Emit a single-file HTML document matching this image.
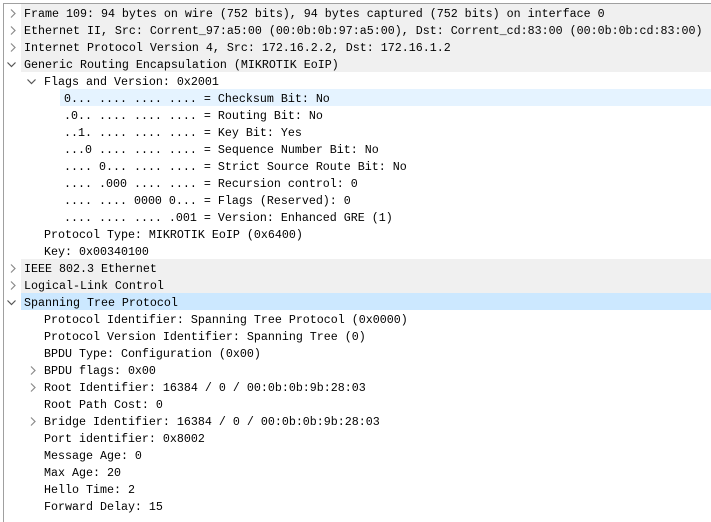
<!DOCTYPE html>
<html><head><style>
body{margin:0;width:711px;height:522px;background:#fff;overflow:hidden;position:relative;font-family:"Liberation Mono",monospace;font-size:11.67px;color:#000}
#frame{position:absolute;left:3px;top:3px;right:0;bottom:0;border-left:1px solid #a0a0a0;border-top:1px solid #a0a0a0}
.r{position:absolute;left:0;right:0;height:17px;line-height:17px;white-space:pre}
.bg{position:absolute;top:0;bottom:0;right:0}
.t{position:absolute;top:1.5px}
.a{position:absolute;top:0}
</style></head><body><div id="frame"></div>
<div id="rows"></div>
<script>
const rows=[
[0,'>','Frame 109: 94 bytes on wire (752 bits), 94 bytes captured (752 bits) on interface 0','g'],
[0,'>','Ethernet II, Src: Corrent_97:a5:00 (00:0b:0b:97:a5:00), Dst: Corrent_cd:83:00 (00:0b:0b:cd:83:00)','g'],
[0,'>','Internet Protocol Version 4, Src: 172.16.2.2, Dst: 172.16.1.2','g'],
[0,'v','Generic Routing Encapsulation (MIKROTIK EoIP)','g'],
[1,'v','Flags and Version: 0x2001',''],
[2,'','0... .... .... .... = Checksum Bit: No','h'],
[2,'','.0.. .... .... .... = Routing Bit: No',''],
[2,'','..1. .... .... .... = Key Bit: Yes',''],
[2,'','...0 .... .... .... = Sequence Number Bit: No',''],
[2,'','.... 0... .... .... = Strict Source Route Bit: No',''],
[2,'','.... .000 .... .... = Recursion control: 0',''],
[2,'','.... .... 0000 0... = Flags (Reserved): 0',''],
[2,'','.... .... .... .001 = Version: Enhanced GRE (1)',''],
[1,'','Protocol Type: MIKROTIK EoIP (0x6400)',''],
[1,'','Key: 0x00340100',''],
[0,'>','IEEE 802.3 Ethernet','g'],
[0,'>','Logical-Link Control','g'],
[0,'v','Spanning Tree Protocol','s'],
[1,'','Protocol Identifier: Spanning Tree Protocol (0x0000)',''],
[1,'','Protocol Version Identifier: Spanning Tree (0)',''],
[1,'','BPDU Type: Configuration (0x00)',''],
[1,'>','BPDU flags: 0x00',''],
[1,'>','Root Identifier: 16384 / 0 / 00:0b:0b:9b:28:03',''],
[1,'','Root Path Cost: 0',''],
[1,'>','Bridge Identifier: 16384 / 0 / 00:0b:0b:9b:28:03',''],
[1,'','Port identifier: 0x8002',''],
[1,'','Message Age: 0',''],
[1,'','Max Age: 20',''],
[1,'','Hello Time: 2',''],
[1,'','Forward Delay: 15','']];
let h='';
rows.forEach((r,i)=>{
 const [lv,ar,tx,st]=r;const x=24+20*lv;
 let bg='';
 if(st==='g')bg='<div class="bg" style="left:21px;background:#f0f0f0"></div>';
 if(st==='s')bg='<div class="bg" style="left:21px;background:#cce8ff"></div>';
 if(st==='h')bg='<div class="bg" style="left:60px;background:#e5f3ff"></div>';
 let a='';
 if(ar==='>')a='<svg class="a" style="left:'+(x-15)+'px;top:5px" width="8" height="9"><path d="M2 0.5L6 4.5L2 8.5" fill="none" stroke="#8a8a8a" stroke-width="1.2"/></svg>';
 if(ar==='v')a='<svg class="a" style="left:'+(x-17)+'px;top:6px" width="10" height="8"><path d="M0.5 1.5L4.5 5.5L8.5 1.5" fill="none" stroke="#555" stroke-width="1.2"/></svg>';
 h+='<div class="r" style="top:'+(4+17*i)+'px">'+bg+a+'<span class="t" style="left:'+x+'px">'+tx.replace(/&/g,'&amp;')+'</span></div>';
});
document.getElementById('rows').innerHTML=h;
</script>
</body></html>
